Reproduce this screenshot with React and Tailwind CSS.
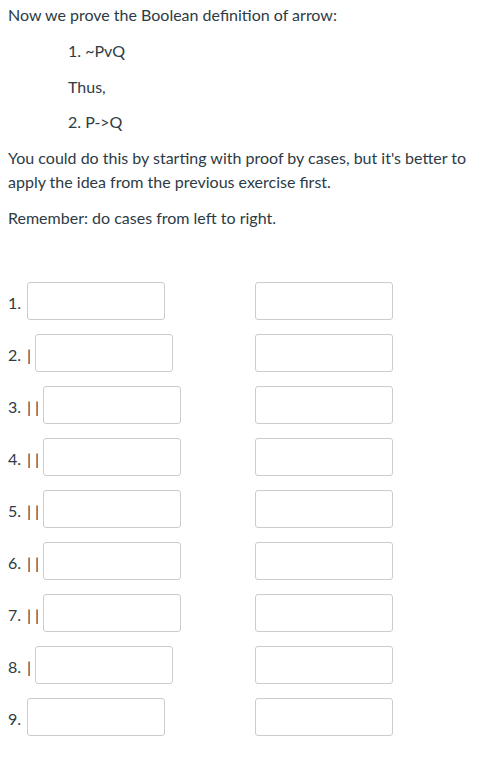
const rows = [
  { n: 1, bars: 0 },
  { n: 2, bars: 1 },
  { n: 3, bars: 2 },
  { n: 4, bars: 2 },
  { n: 5, bars: 2 },
  { n: 6, bars: 2 },
  { n: 7, bars: 2 },
  { n: 8, bars: 1 },
  { n: 9, bars: 0 },
];

function Box() {
  return (
    <input
      type="text"
      className="h-[38px] w-[138px] rounded-[3px] border border-[#c7cdd1] bg-white px-1.5 outline-none"
    />
  );
}

export default function App() {
  return (
    <div className="min-h-screen bg-white px-2 pt-[3px] text-[16px] leading-[24.5px] text-[#2d3b45] font-['Lato','Liberation_Sans',sans-serif]">
      <p className="mb-[11.5px]">Now we prove the Boolean definition of arrow:</p>
      <div className="pl-[60px]">
        <p className="mb-[11px]">1. ~PvQ</p>
        <p className="mb-[11px]">Thus,</p>
        <p className="mb-[11px]">2. P-&gt;Q</p>
      </div>
      <p className="mb-[11px]">
        You could do this by starting with proof by cases, but it's better to
        apply the idea from the previous exercise first.
      </p>
      <p>Remember: do cases from left to right.</p>

      {/* proof lines */}
      <div className="mt-[52px] flex flex-col gap-[14px]">
        {rows.map((r) => (
          <div key={r.n} className="flex items-center">
            <div className="flex w-[247px] items-center">
              <span className="mt-[5px] w-[19px] shrink-0">{r.n}.</span>
              {Array.from({ length: r.bars }).map((_, i) => (
                <span key={i} className="mt-[5px] w-[8px] shrink-0">|</span>
              ))}
              <Box />
            </div>
            <Box />
          </div>
        ))}
      </div>
    </div>
  );
}
